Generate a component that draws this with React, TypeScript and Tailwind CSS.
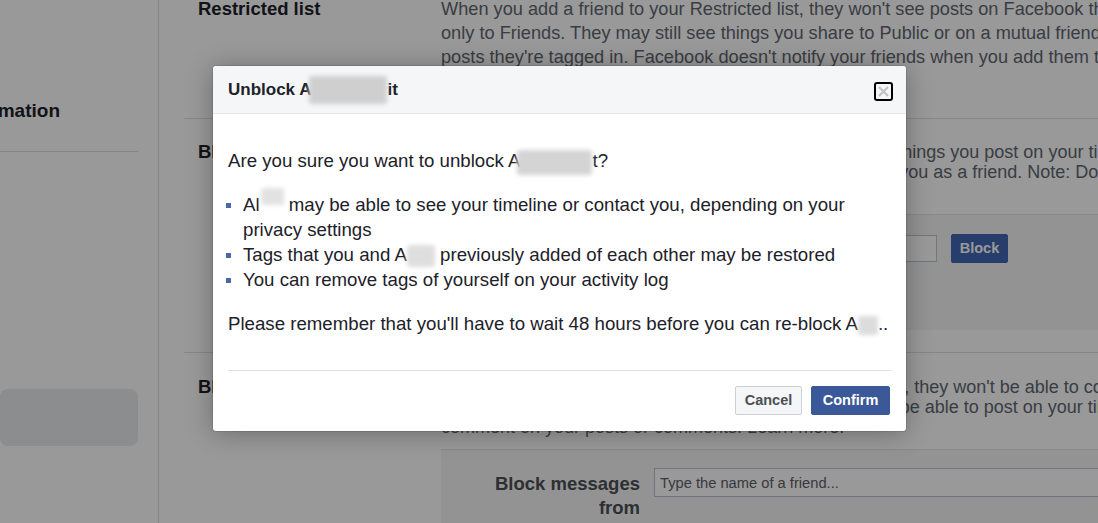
import React from "react";

function Blur({ className }: { className: string }) {
    return <span className={"inline-block rounded-[3px] blur-[2px] " + className} />;
}

function Bullet({ children }: { children: React.ReactNode }) {
    return (
        <li className="flex items-start">
            <span className="-ml-[2px] mt-[11px] mr-[12px] h-[5px] w-[5px] shrink-0 bg-[#4b67a6]" />
            <span>{children}</span>
        </li>
    );
}

function Sidebar() {
    return (
        <aside className="w-[159px] shrink-0 border-r border-[#dddfe2] pr-[20px]">
            <div className="mt-[99px] flex w-[60px] justify-end overflow-hidden whitespace-nowrap text-[19px] leading-[24px] font-bold">
                <span className="shrink-0">Your Information</span>
            </div>
            <div className="mt-[28px] h-px bg-[#dddfe2]" />
            <div className="mt-[237px] h-[57px] rounded-lg bg-[#e9ebee]" />
        </aside>
    );
}

function Main() {
    return (
        <main className="min-w-0 flex-1">
            <section className="-mt-[4px] ml-[25px] flex h-[123px] border-b border-[#dddfe2]">
                <div className="w-[257px] shrink-0 pl-[14px] text-[18.5px] leading-[25px] font-bold">
                    Restricted list
                </div>
                <div className="mt-[1px] whitespace-nowrap text-[18.2px] leading-[24px] text-[#606770]">
                    When you add a friend to your Restricted list, they won't see posts on Facebook that you share
                    <br />
                    only to Friends. They may still see things you share to Public or on a mutual friend's timeline, and
                    <br />
                    posts they're tagged in. Facebook doesn't notify your friends when you add them to your Restricted list.
                </div>
            </section>

            <section className="ml-[25px] flex border-b border-[#dddfe2] pt-[23px] pb-[22px]">
                <div className="w-[257px] shrink-0 pl-[14px] text-[18.5px] leading-[20px] font-bold">Block users</div>
                <div className="min-w-0 flex-1">
                    <div className="whitespace-nowrap text-[18px] leading-[20px] text-[#606770]">
                        Once you block someone, that person can no longer see things you post on your timeline, tag you, invite you
                        <br />
                        to events or groups, start a conversation with you, or add you as a friend. Note: Does not include apps, games or groups you both participate in.
                    </div>
                    <div className="mt-[32px] flex h-[116px] border-t border-[#e5e5e5] bg-[#f5f6f7] pt-[20px]">
                        <div className="w-[199px] shrink-0 pt-[2px] text-right text-[18.5px] leading-[24px] font-bold text-[#4b4f56]">
                            Block users
                        </div>
                        <input
                            className="ml-[14px] h-[27px] w-[283px] shrink-0 border border-[#bdc7d8] bg-white px-[5px] text-[14.7px]"
                            placeholder="Type the name or email"
                        />
                        <button className="-mt-px ml-[14px] h-[29px] w-[57px] shrink-0 rounded-[2px] border border-[#4267b2] bg-[#4267b2] text-[14.5px] font-bold text-white">
                            Block
                        </button>
                    </div>
                </div>
            </section>

            <section className="ml-[25px] flex pt-[24px]">
                <div className="w-[257px] shrink-0 pl-[14px] text-[18.5px] leading-[20px] font-bold">Block messages</div>
                <div className="min-w-0 flex-1">
                    <div className="whitespace-nowrap text-[18px] leading-[20px] text-[#606770]">
                        If you block messages and video calls from someone here, they won't be able to contact you in the Messenger
                        <br />
                        app either. Unless you block someone's profile, they may be able to post on your timeline, tag you, and
                        <br />
                        comment on your posts or comments. Learn more.
                    </div>
                    <div className="mt-[12px] flex h-[200px] border-t border-[#e5e5e5] bg-[#f5f6f7] pt-[18px]">
                        <div className="w-[199px] shrink-0 pt-[4px] text-right text-[18.5px] leading-[24px] font-bold text-[#4b4f56]">
                            Block messages
                            <br />
                            from
                        </div>
                        <input
                            className="ml-[14px] h-[29px] w-[460px] shrink-0 border border-[#bdc1c9] bg-white px-[5px] text-[14.7px] placeholder:text-[#5d6168]"
                            placeholder="Type the name of a friend..."
                        />
                    </div>
                </div>
            </section>
        </main>
    );
}

function Dialog() {
    return (
        <div className="absolute top-[66px] left-[213px] w-[693px] overflow-hidden rounded-[3px] bg-white shadow-[0_2px_26px_rgba(0,0,0,0.3),0_0_0_1px_rgba(0,0,0,0.1)]">
            <div className="flex h-[48px] items-center justify-between border-b border-[#e5e5e5] bg-[#f5f6f7] pr-[13px] pl-[15px]">
                <h2 className="text-[17px] leading-[20px] font-bold text-[#1d2129]">
                    Unblock A
                    <Blur className="-my-[6px] -ml-[2px] h-[28px] w-[78px] align-middle bg-[#cfcfcf]" />
                    it
                </h2>
                <button
                    type="button"
                    className="mt-[4px] flex h-[19px] w-[19px] items-center justify-center rounded-[3px] border-2 border-black"
                >
                    <svg width="11" height="11" viewBox="0 0 11 11">
                        <path d="M1 1L10 10M10 1L1 10" stroke="#bfc3c8" strokeWidth="2.2" />
                    </svg>
                </button>
            </div>

            <div className="px-[15px] pt-[34px] text-[18.67px] leading-[25px] text-[#1d2129]">
                <p>
                    Are you sure you want to unblock A
                    <Blur className="-my-[5px] -ml-[3px] h-[25px] w-[75px] align-middle bg-[#d4d4d4]" />
                    t?
                </p>
                <ul className="mt-[19px]">
                    <Bullet>
                        Al
                        <Blur className="-mt-[5px] ml-[1px] h-[17px] w-[23px] align-[6px] bg-[#e2e2e2]" />
                        {" "}may be able to see your timeline or contact you, depending on your
                        <br />
                        privacy settings
                    </Bullet>
                    <Bullet>
                        Tags that you and A
                        <Blur className="-my-[3px] h-[22px] w-[28px] align-middle bg-[#dedede]" />
                        {" "}previously added of each other may be restored
                    </Bullet>
                    <Bullet>You can remove tags of yourself on your activity log</Bullet>
                </ul>
                <p className="mt-[19px]">
                    Please remember that you'll have to wait 48 hours before you can re-block A
                    <Blur className="-my-[2px] h-[19px] w-[20px] align-middle bg-[#dcdcdc]" />
                    ..
                </p>
                <div className="mt-[34px] h-px bg-[#dddfe2]" />
            </div>

            <div className="flex justify-end gap-[9px] px-[16px] pt-[15px] pb-[16px]">
                <button
                    type="button"
                    className="h-[29px] w-[67px] rounded-[2px] border border-[#ccd0d5] bg-[#f5f6f7] text-[14.5px] font-bold text-[#4b4f56]"
                >
                    Cancel
                </button>
                <button
                    type="button"
                    className="h-[29px] w-[79px] rounded-[2px] border border-[#3b5998] bg-[#3b5998] text-[14.5px] font-bold text-white"
                >
                    Confirm
                </button>
            </div>
        </div>
    );
}

export default function App() {
    return (
        <div className="relative h-[523px] w-[1098px] overflow-hidden bg-white font-['Liberation_Sans',Arial,sans-serif] text-[#1d2129]">
            <div className="flex h-full">
                <Sidebar />
                <Main />
            </div>
            <div className="absolute inset-0 bg-black/40" />
            <Dialog />
        </div>
    );
}
